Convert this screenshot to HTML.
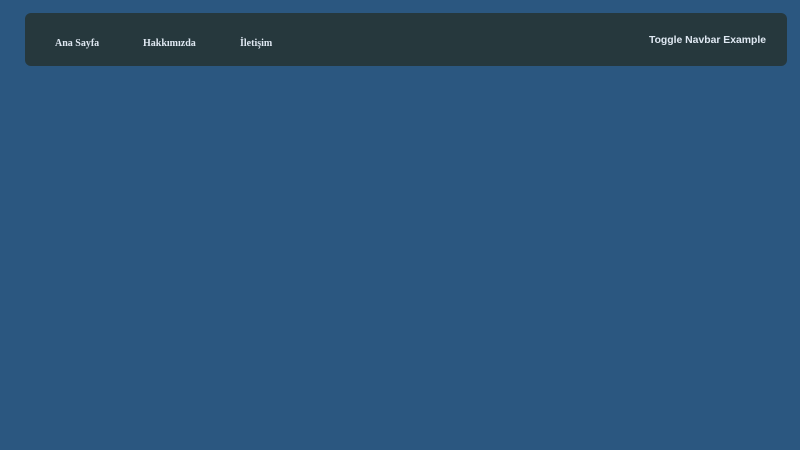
<!DOCTYPE html>
<html><head><meta charset="utf-8"><style>
html,body{margin:0;padding:0;width:800px;height:450px;background:#2b5780;overflow:hidden}
.nav{position:absolute;left:25px;top:13px;width:762px;height:53px;background:#26383d;border-radius:6px}
.l{position:absolute;top:38px;font:bold 10px "Liberation Serif",serif;color:#dfe8f2}
.r{position:absolute;top:35px;left:649px;font:bold 10.4px "Liberation Sans",sans-serif;color:#dfe8f2}
</style></head><body>
<div class="nav"></div>
<div class="l" style="left:55px">Ana Sayfa</div>
<div class="l" style="left:143px">Hakkımızda</div>
<div class="l" style="left:240px">İletişim</div>
<div class="r">Toggle Navbar Example</div>
</body></html>
